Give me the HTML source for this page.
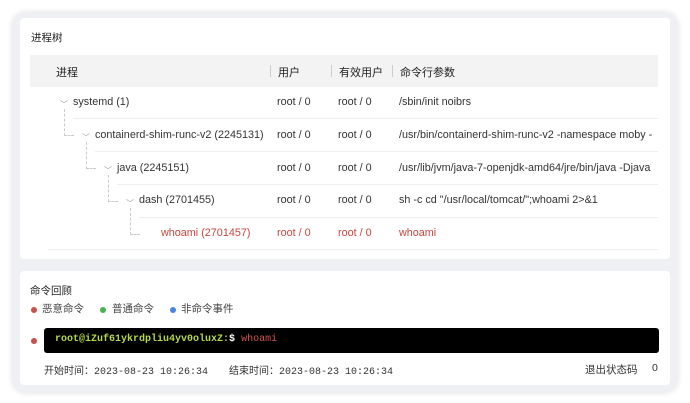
<!DOCTYPE html>
<html><head><meta charset="utf-8"><style>
*{margin:0;padding:0;box-sizing:border-box}
body{width:690px;height:403px;background:#fff;font-family:"Liberation Sans","Noto Sans CJK SC",sans-serif;position:relative;overflow:hidden;color:#333}
.frame{position:absolute;left:12px;top:12px;width:666px;height:381px;background:#eef0f4;border-radius:14px;box-shadow:0 0 6px rgba(0,0,0,.12)}
.card{position:absolute;background:#fff;border-radius:4px}
.t{position:absolute;font-size:10.8px;white-space:nowrap}
.red{color:#c8453f}
.line{position:absolute;height:1px;background:#eceef1}
.dash{position:absolute;border-left:1px dashed #ccc;border-bottom:1px dashed #ccc}
.chev{position:absolute;font-size:8px;color:#999}
.mono{font-family:"Liberation Mono",monospace}
.dot{position:absolute;width:6px;height:6px;border-radius:3px}
</style></head><body>
<div class="frame"></div>
<div class="card" style="left:20px;top:18px;width:650px;height:241px"></div>
<div class="card" style="left:20px;top:271px;width:650px;height:114px"></div>
<div class="t" style="left:31px;top:30px;font-size:10.5px;color:#222">进程树</div>
<div style="position:absolute;left:30px;top:55px;width:628px;height:32px;background:#f3f3f3"></div>
<div class="t" style="left:56px;top:64px;font-size:11px;color:#222">进程</div>
<div style="position:absolute;left:270px;top:65px;width:1px;height:12px;background:#ccc"></div>
<div class="t" style="left:278px;top:64px;font-size:11px;color:#222">用户</div>
<div style="position:absolute;left:331px;top:65px;width:1px;height:12px;background:#ccc"></div>
<div class="t" style="left:339px;top:64px;font-size:11px;color:#222">有效用户</div>
<div style="position:absolute;left:392px;top:65px;width:1px;height:12px;background:#ccc"></div>
<div class="t" style="left:400px;top:64px;font-size:11px;color:#222">命令行参数</div>

<div class="line" style="left:73px;top:118px;width:585px"></div>
<div class="line" style="left:95px;top:151px;width:563px"></div>
<div class="line" style="left:117px;top:184px;width:541px"></div>
<div class="line" style="left:139px;top:217px;width:519px"></div>
<div class="line" style="left:48px;top:249px;width:610px"></div>

<div class="dash" style="left:64px;top:109px;width:10px;height:27px"></div>
<div class="dash" style="left:86px;top:142px;width:10px;height:27px"></div>
<div class="dash" style="left:108px;top:175px;width:10px;height:27px"></div>
<div class="dash" style="left:130px;top:208px;width:10px;height:27px"></div>

<div class="chev" style="left:60px;top:99px">﹀</div>
<div class="chev" style="left:82px;top:132px">﹀</div>
<div class="chev" style="left:104px;top:165px">﹀</div>
<div class="chev" style="left:126px;top:198px">﹀</div>

<div class="t" style="left:73px;top:96px">systemd (1)</div>
<div class="t" style="left:95px;top:129px">containerd-shim-runc-v2 (2245131)</div>
<div class="t" style="left:117px;top:162px">java (2245151)</div>
<div class="t" style="left:139px;top:194px">dash (2701455)</div>
<div class="t red" style="left:161px;top:227px">whoami (2701457)</div>

<div class="t" style="left:277px;top:96px">root / 0</div><div class="t" style="left:338px;top:96px">root / 0</div><div class="t" style="left:399px;top:96px">/sbin/init noibrs</div>
<div class="t" style="left:277px;top:129px">root / 0</div><div class="t" style="left:338px;top:129px">root / 0</div><div class="t" style="left:399px;top:129px;width:259px;overflow:hidden">/usr/bin/containerd-shim-runc-v2 -namespace moby -</div>
<div class="t" style="left:277px;top:162px">root / 0</div><div class="t" style="left:338px;top:162px">root / 0</div><div class="t" style="left:399px;top:162px;width:259px;overflow:hidden">/usr/lib/jvm/java-7-openjdk-amd64/jre/bin/java -Djava</div>
<div class="t" style="left:277px;top:194px">root / 0</div><div class="t" style="left:338px;top:194px">root / 0</div><div class="t" style="left:399px;top:194px">sh -c cd "/usr/local/tomcat/";whoami 2&gt;&amp;1</div>
<div class="t red" style="left:277px;top:227px">root / 0</div><div class="t red" style="left:338px;top:227px">root / 0</div><div class="t red" style="left:399px;top:227px">whoami</div>

<div class="t" style="left:30px;top:283px;font-size:10.5px;color:#222">命令回顾</div>
<div class="dot" style="left:31px;top:307px;background:#c9504c"></div><div class="t" style="left:42px;top:301px;font-size:10.5px;color:#444">恶意命令</div>
<div class="dot" style="left:100px;top:307px;background:#4caf50"></div><div class="t" style="left:112px;top:301px;font-size:10.5px;color:#444">普通命令</div>
<div class="dot" style="left:170px;top:307px;background:#4a86d8"></div><div class="t" style="left:181px;top:301px;font-size:10.5px;color:#444">非命令事件</div>
<div class="dot" style="left:31px;top:338px;background:#c9504c"></div>
<div style="position:absolute;left:44px;top:328px;width:615px;height:25px;background:#000;border-radius:3px"></div>
<div class="t mono" style="left:55px;top:334px;font-size:10px;font-weight:bold;color:#b5d84a">root@iZuf61ykrdpliu4yv0oluxZ:<span style="color:#fff">$</span> <span style="color:#d0544e;font-weight:normal">whoami</span></div>
<div class="t mono" style="left:44px;top:362px;font-size:10px;color:#333"><span style="font-family:'Noto Sans CJK SC'">开始时间：</span>2023-08-23 10:26:34</div>
<div class="t mono" style="left:229px;top:362px;font-size:10px;color:#333"><span style="font-family:'Noto Sans CJK SC'">结束时间：</span>2023-08-23 10:26:34</div>
<div class="t" style="left:585px;top:362px;font-size:10.5px">退出状态码</div>
<div class="t" style="left:652px;top:362px;font-size:10.5px">0</div>
</body></html>
